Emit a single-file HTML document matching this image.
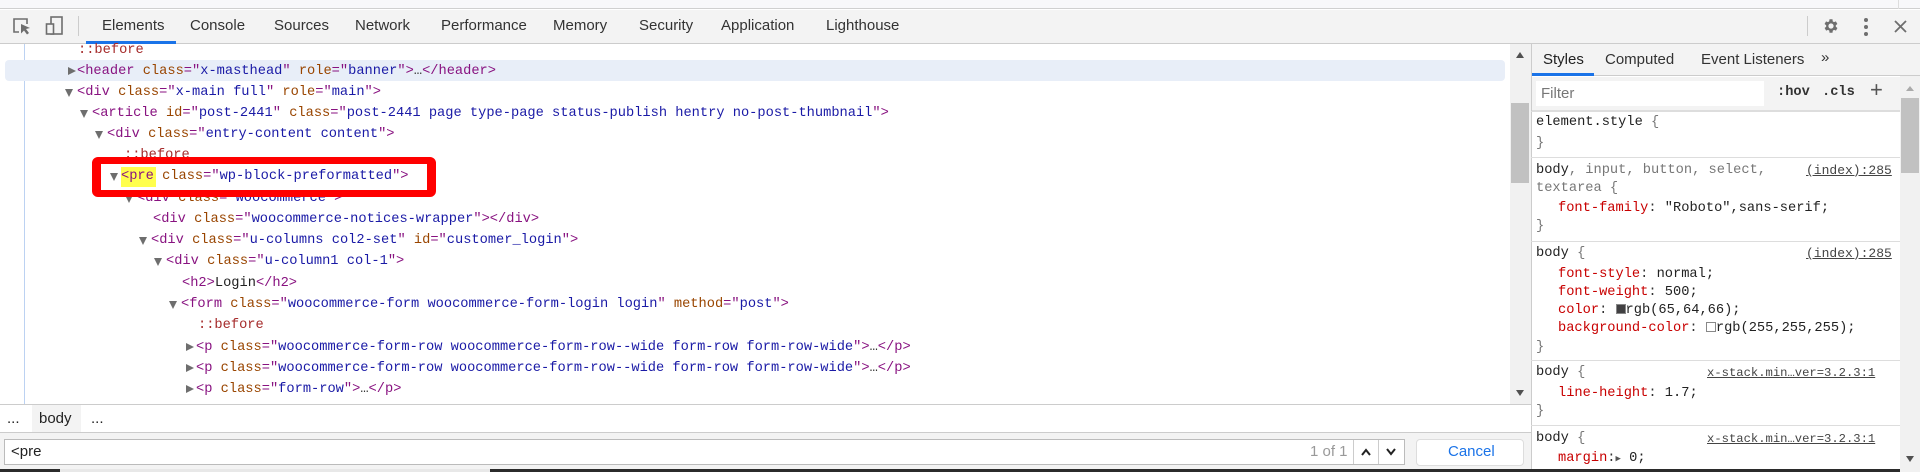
<!DOCTYPE html>
<html><head><meta charset="utf-8"><style>
*{margin:0;padding:0;box-sizing:border-box}
body{width:1920px;height:472px;overflow:hidden;background:#fff;position:relative;font-family:"Liberation Sans",sans-serif;color:#333}
.a{position:absolute;white-space:pre}
.m{font-family:"Liberation Mono","DejaVu Sans Mono",monospace;font-size:13.7px;line-height:20px}
.t{color:#881280}.n{color:#994500}.v{color:#1a1aa6}.ps{color:#c80000}.k{color:#222}
.tri{position:absolute;width:0;height:0}
.dn{border-left:4.5px solid transparent;border-right:4.5px solid transparent;border-top:8px solid #6e6e6e}
.rt{border-top:4.5px solid transparent;border-bottom:4.5px solid transparent;border-left:8px solid #6e6e6e}
.tab{position:absolute;top:17px;font-size:15px;color:#333}
.sp{color:#c80000}.sv{color:#222}.sel{color:#222}.g{color:#777}
.sep{position:absolute;left:1531px;width:369px;height:1px;background:#ddd}
.lk{text-decoration:underline;color:#444;font-size:13px}
</style></head><body>
<div class="a" style="left:0;top:0;width:1920px;height:9px;background:#f8f8fa;border-bottom:1px solid #d0d0d0"></div>
<div class="a" style="left:1898px;top:0;width:1px;height:9px;background:#ddd"></div>
<div class="a" style="left:0;top:10px;width:1920px;height:34px;background:#f3f3f3;border-bottom:1px solid #ccc"></div>
<svg class="a" style="left:12px;top:15px" width="20" height="22" viewBox="0 0 20 22"><path d="M7 17H2V4h13v5" fill="none" stroke="#6e6e6e" stroke-width="1.6"/><path d="M9 9l9 4-4 1 3 4-2 1.5-3-4-3 3z" fill="#6e6e6e"/></svg>
<svg class="a" style="left:45px;top:15px" width="20" height="22" viewBox="0 0 20 22"><rect x="6" y="2" width="11" height="17" fill="none" stroke="#6e6e6e" stroke-width="1.6"/><rect x="1.5" y="9" width="7" height="10" fill="#f3f3f3" stroke="#6e6e6e" stroke-width="1.6"/></svg>
<div class="a" style="left:78px;top:16px;width:1px;height:20px;background:#ccc"></div>
<div class="tab" style="left:102px">Elements</div>
<div class="a" style="left:86px;top:41px;width:90px;height:3px;background:#1a73e8"></div>
<div class="tab" style="left:190px">Console</div>
<div class="tab" style="left:274px">Sources</div>
<div class="tab" style="left:355px">Network</div>
<div class="tab" style="left:441px">Performance</div>
<div class="tab" style="left:553px">Memory</div>
<div class="tab" style="left:639px">Security</div>
<div class="tab" style="left:721px">Application</div>
<div class="tab" style="left:826px">Lighthouse</div>
<div class="a" style="left:1807px;top:16px;width:1px;height:20px;background:#ccc"></div>
<svg class="a" style="left:1822px;top:17px" width="18" height="18" viewBox="0 0 24 24"><path fill="#6e6e6e" d="M19.4 13a7.5 7.5 0 0 0 0-2l2.1-1.6-2-3.5-2.5 1a7.3 7.3 0 0 0-1.7-1L15 3h-4l-.4 2.9a7.3 7.3 0 0 0-1.7 1l-2.5-1-2 3.5L6.6 11a7.5 7.5 0 0 0 0 2l-2.1 1.6 2 3.5 2.5-1a7.3 7.3 0 0 0 1.7 1L11 21h4l.4-2.9a7.3 7.3 0 0 0 1.7-1l2.5 1 2-3.5zM13 15.5a3.5 3.5 0 1 1 0-7 3.5 3.5 0 0 1 0 7z" transform="translate(-1 0)"/></svg>
<div class="a" style="left:1864px;top:18px;width:4px;height:4px;border-radius:2px;background:#6e6e6e"></div>
<div class="a" style="left:1864px;top:25px;width:4px;height:4px;border-radius:2px;background:#6e6e6e"></div>
<div class="a" style="left:1864px;top:32px;width:4px;height:4px;border-radius:2px;background:#6e6e6e"></div>
<svg class="a" style="left:1894px;top:20px" width="13" height="13" viewBox="0 0 13 13"><path d="M1 1l11 11M12 1L1 12" stroke="#6e6e6e" stroke-width="1.8"/></svg>

<div class="a" style="left:24px;top:44px;width:1px;height:360px;background:#bcd2f2"></div>
<div class="a" style="left:5px;top:60px;width:1500px;height:21px;background:#e8eef8;border-radius:4px"></div>
<div class="a m" style="left:78px;top:41px;color:#a52a2a">::before</div>
<div class="tri rt" style="left:68px;top:67px"></div>
<div class="a m" style="left:77px;top:62px"><span class="t">&lt;header</span> <span class="n">class</span><span class="t">="</span><span class="v">x-masthead</span><span class="t">"</span> <span class="n">role</span><span class="t">="</span><span class="v">banner</span><span class="t">"&gt;</span>…<span class="t">&lt;/header&gt;</span></div>
<div class="tri dn" style="left:65px;top:89px"></div>
<div class="a m" style="left:77px;top:83px"><span class="t">&lt;div</span> <span class="n">class</span><span class="t">="</span><span class="v">x-main full</span><span class="t">"</span> <span class="n">role</span><span class="t">="</span><span class="v">main</span><span class="t">"&gt;</span></div>
<div class="tri dn" style="left:80px;top:110px"></div>
<div class="a m" style="left:92px;top:104px"><span class="t">&lt;article</span> <span class="n">id</span><span class="t">="</span><span class="v">post-2441</span><span class="t">"</span> <span class="n">class</span><span class="t">="</span><span class="v">post-2441 page type-page status-publish hentry no-post-thumbnail</span><span class="t">"&gt;</span></div>
<div class="tri dn" style="left:95px;top:131px"></div>
<div class="a m" style="left:107px;top:125px"><span class="t">&lt;div</span> <span class="n">class</span><span class="t">="</span><span class="v">entry-content content</span><span class="t">"&gt;</span></div>
<div class="a m" style="left:124px;top:146px;color:#a52a2a">::before</div>
<div class="tri dn" style="left:125px;top:195px"></div>
<div class="a m" style="left:137px;top:189px"><span class="t">&lt;div</span> <span class="n">class</span><span class="t">="</span><span class="v">woocommerce</span><span class="t">"&gt;</span></div>
<div class="a" style="left:92px;top:157px;width:344px;height:40px;border:8px solid #f00;border-width:7px 9px;border-radius:6px;background:#fff"></div>
<div class="a" style="left:121px;top:167px;width:35px;height:20px;background:#ffff4d"></div>
<div class="tri dn" style="left:110px;top:173px"></div>
<div class="a m" style="left:121px;top:167px"><span class="t">&lt;pre</span> <span class="n">class</span><span class="t">="</span><span class="v">wp-block-preformatted</span><span class="t">"&gt;</span></div>
<div class="a m" style="left:153px;top:210px"><span class="t">&lt;div</span> <span class="n">class</span><span class="t">="</span><span class="v">woocommerce-notices-wrapper</span><span class="t">"&gt;&lt;/div&gt;</span></div>
<div class="tri dn" style="left:139px;top:237px"></div>
<div class="a m" style="left:151px;top:231px"><span class="t">&lt;div</span> <span class="n">class</span><span class="t">="</span><span class="v">u-columns col2-set</span><span class="t">"</span> <span class="n">id</span><span class="t">="</span><span class="v">customer_login</span><span class="t">"&gt;</span></div>
<div class="tri dn" style="left:154px;top:258px"></div>
<div class="a m" style="left:166px;top:252px"><span class="t">&lt;div</span> <span class="n">class</span><span class="t">="</span><span class="v">u-column1 col-1</span><span class="t">"&gt;</span></div>
<div class="a m" style="left:182px;top:274px"><span class="t">&lt;h2&gt;</span><span class="k">Login</span><span class="t">&lt;/h2&gt;</span></div>
<div class="tri dn" style="left:169px;top:301px"></div>
<div class="a m" style="left:181px;top:295px"><span class="t">&lt;form</span> <span class="n">class</span><span class="t">="</span><span class="v">woocommerce-form woocommerce-form-login login</span><span class="t">"</span> <span class="n">method</span><span class="t">="</span><span class="v">post</span><span class="t">"&gt;</span></div>
<div class="a m" style="left:198px;top:316px;color:#a52a2a">::before</div>
<div class="tri rt" style="left:186px;top:343px"></div>
<div class="a m" style="left:196px;top:338px"><span class="t">&lt;p</span> <span class="n">class</span><span class="t">="</span><span class="v">woocommerce-form-row woocommerce-form-row--wide form-row form-row-wide</span><span class="t">"&gt;</span>…<span class="t">&lt;/p&gt;</span></div>
<div class="tri rt" style="left:186px;top:364px"></div>
<div class="a m" style="left:196px;top:359px"><span class="t">&lt;p</span> <span class="n">class</span><span class="t">="</span><span class="v">woocommerce-form-row woocommerce-form-row--wide form-row form-row-wide</span><span class="t">"&gt;</span>…<span class="t">&lt;/p&gt;</span></div>
<div class="tri rt" style="left:186px;top:385px"></div>
<div class="a m" style="left:196px;top:380px"><span class="t">&lt;p</span> <span class="n">class</span><span class="t">="</span><span class="v">form-row</span><span class="t">"&gt;</span>…<span class="t">&lt;/p&gt;</span></div>
<div class="a" style="left:1510px;top:44px;width:21px;height:360px;background:#f1f1f1"></div>
<div class="a" style="left:1511px;top:103px;width:18px;height:80px;background:#c1c1c1"></div>
<div class="tri" style="left:1516px;top:52px;border-left:4px solid transparent;border-right:4px solid transparent;border-bottom:6px solid #505050"></div>
<div class="tri" style="left:1516px;top:390px;border-left:4px solid transparent;border-right:4px solid transparent;border-top:6px solid #505050"></div>
<div class="a" style="left:1531px;top:44px;width:1px;height:428px;background:#ccc"></div>
<div class="a" style="left:0;top:404px;width:1531px;height:1px;background:#ccc"></div>
<div class="a" style="left:32px;top:405px;width:49px;height:27px;background:#f3f3f3"></div>
<div class="a" style="left:7px;top:410px;font-size:15px;color:#222">...</div>
<div class="a" style="left:39px;top:410px;font-size:15px;color:#222">body</div>
<div class="a" style="left:91px;top:410px;font-size:15px;color:#222">...</div>
<div class="a" style="left:0;top:432px;width:1531px;height:37px;background:#f3f3f3;border-top:1px solid #ccc"></div>
<div class="a" style="left:4px;top:439px;width:1401px;height:26px;background:#fff;border:1px solid #bbb"></div>
<div class="a" style="left:11px;top:443px;font-size:15px;color:#222">&lt;pre</div>
<div class="a" style="left:1310px;top:443px;font-size:15px;color:#999">1 of 1</div>
<div class="a" style="left:1353px;top:440px;width:1px;height:24px;background:#ccc"></div>
<div class="a" style="left:1378px;top:440px;width:1px;height:24px;background:#ccc"></div>
<svg class="a" style="left:1360px;top:447px" width="12" height="10" viewBox="0 0 12 10"><path d="M2 8l4-5 4 5" fill="none" stroke="#222" stroke-width="2"/></svg>
<svg class="a" style="left:1385px;top:447px" width="12" height="10" viewBox="0 0 12 10"><path d="M2 2l4 5 4-5" fill="none" stroke="#222" stroke-width="2"/></svg>
<div class="a" style="left:1416px;top:439px;width:108px;height:27px;background:#fff;border:1px solid #ddd;border-radius:4px"></div>
<div class="a" style="left:1448px;top:443px;font-size:15px;color:#1a73e8">Cancel</div>
<div class="a" style="left:0;top:469px;width:1920px;height:3px;background:#2b2b2b"></div>
<div class="a" style="left:60px;top:469px;width:430px;height:3px;background:#e8e8e8"></div>

<div class="a" style="left:1532px;top:44px;width:388px;height:32px;background:#f3f3f3;border-bottom:1px solid #ccc"></div>
<div class="tab" style="left:1543px;top:51px;color:#222">Styles</div>
<div class="a" style="left:1532px;top:73px;width:62px;height:3px;background:#1a73e8"></div>
<div class="tab" style="left:1605px;top:51px">Computed</div>
<div class="tab" style="left:1701px;top:51px">Event Listeners</div>
<div class="tab" style="left:1821px;top:49px">»</div>
<div class="a" style="left:1532px;top:77px;width:388px;height:34px;background:#f3f3f3;border-bottom:1px solid #ddd"></div>
<div class="a" style="left:1536px;top:81px;width:228px;height:25px;background:#fff"></div>
<div class="a" style="left:1541px;top:85px;font-size:15px;color:#777">Filter</div>
<div class="a m" style="left:1777px;top:83px;font-weight:bold;color:#333">:hov</div>
<div class="a m" style="left:1822px;top:83px;font-weight:bold;color:#333">.cls</div>
<div class="a" style="left:1870px;top:77px;font-size:22px;color:#555">+</div>
<div class="a" style="left:1900px;top:76px;width:20px;height:396px;background:#f1f1f1"></div>
<div class="a" style="left:1901px;top:98px;width:18px;height:75px;background:#c1c1c1"></div>
<div class="tri" style="left:1906px;top:86px;border-left:4px solid transparent;border-right:4px solid transparent;border-bottom:5px solid #aaa"></div>
<div class="tri" style="left:1906px;top:456px;border-left:4px solid transparent;border-right:4px solid transparent;border-top:6px solid #505050"></div>
<div style="position:absolute;left:1536px;top:0;width:364px;height:472px">
<div class="a m" style="left:0;top:113px"><span class="sel">element.style</span> <span class="g">{</span></div>
<div class="a m g" style="left:0;top:134px">}</div>
<div class="a m" style="left:0;top:161px"><span class="sel">body</span><span class="g">, input, button, select,</span></div>
<div class="a m lk" style="left:270px;top:161px">(index):285</div>
<div class="a m g" style="left:0;top:179px">textarea {</div>
<div class="a m" style="left:22px;top:199px"><span class="sp">font-family</span>: <span class="sv">"Roboto",sans-serif;</span></div>
<div class="a m g" style="left:0;top:217px">}</div>
<div class="a m" style="left:0;top:244px"><span class="sel">body</span> <span class="g">{</span></div>
<div class="a m lk" style="left:270px;top:244px">(index):285</div>
<div class="a m" style="left:22px;top:265px"><span class="sp">font-style</span>: <span class="sv">normal;</span></div>
<div class="a m" style="left:22px;top:283px"><span class="sp">font-weight</span>: <span class="sv">500;</span></div>
<div class="a m" style="left:22px;top:301px"><span class="sp">color</span>: <span style="display:inline-block;width:10px;height:10px;background:#414042;border:1px solid #888;vertical-align:-1px"></span><span class="sv">rgb(65,64,66);</span></div>
<div class="a m" style="left:22px;top:319px"><span class="sp">background-color</span>: <span style="display:inline-block;width:10px;height:10px;background:#fff;border:1px solid #888;vertical-align:-1px"></span><span class="sv">rgb(255,255,255);</span></div>
<div class="a m g" style="left:0;top:338px">}</div>
<div class="a m" style="left:0;top:363px"><span class="sel">body</span> <span class="g">{</span></div>
<div class="a m lk" style="left:171px;top:363px;font-size:12.2px">x-stack.min…ver=3.2.3:1</div>
<div class="a m" style="left:22px;top:384px"><span class="sp">line-height</span>: <span class="sv">1.7;</span></div>
<div class="a m g" style="left:0;top:402px">}</div>
<div class="a m" style="left:0;top:429px"><span class="sel">body</span> <span class="g">{</span></div>
<div class="a m lk" style="left:171px;top:429px;font-size:12.2px">x-stack.min…ver=3.2.3:1</div>
<div class="a m" style="left:22px;top:449px"><span class="sp">margin</span>:<span style="font-size:9px;color:#555">▶</span> <span class="sv">0;</span></div>
</div>
<div class="sep" style="top:111px"></div>
<div class="sep" style="top:157px"></div>
<div class="sep" style="top:241px"></div>
<div class="sep" style="top:360px"></div>
<div class="sep" style="top:425px"></div>
</body></html>
